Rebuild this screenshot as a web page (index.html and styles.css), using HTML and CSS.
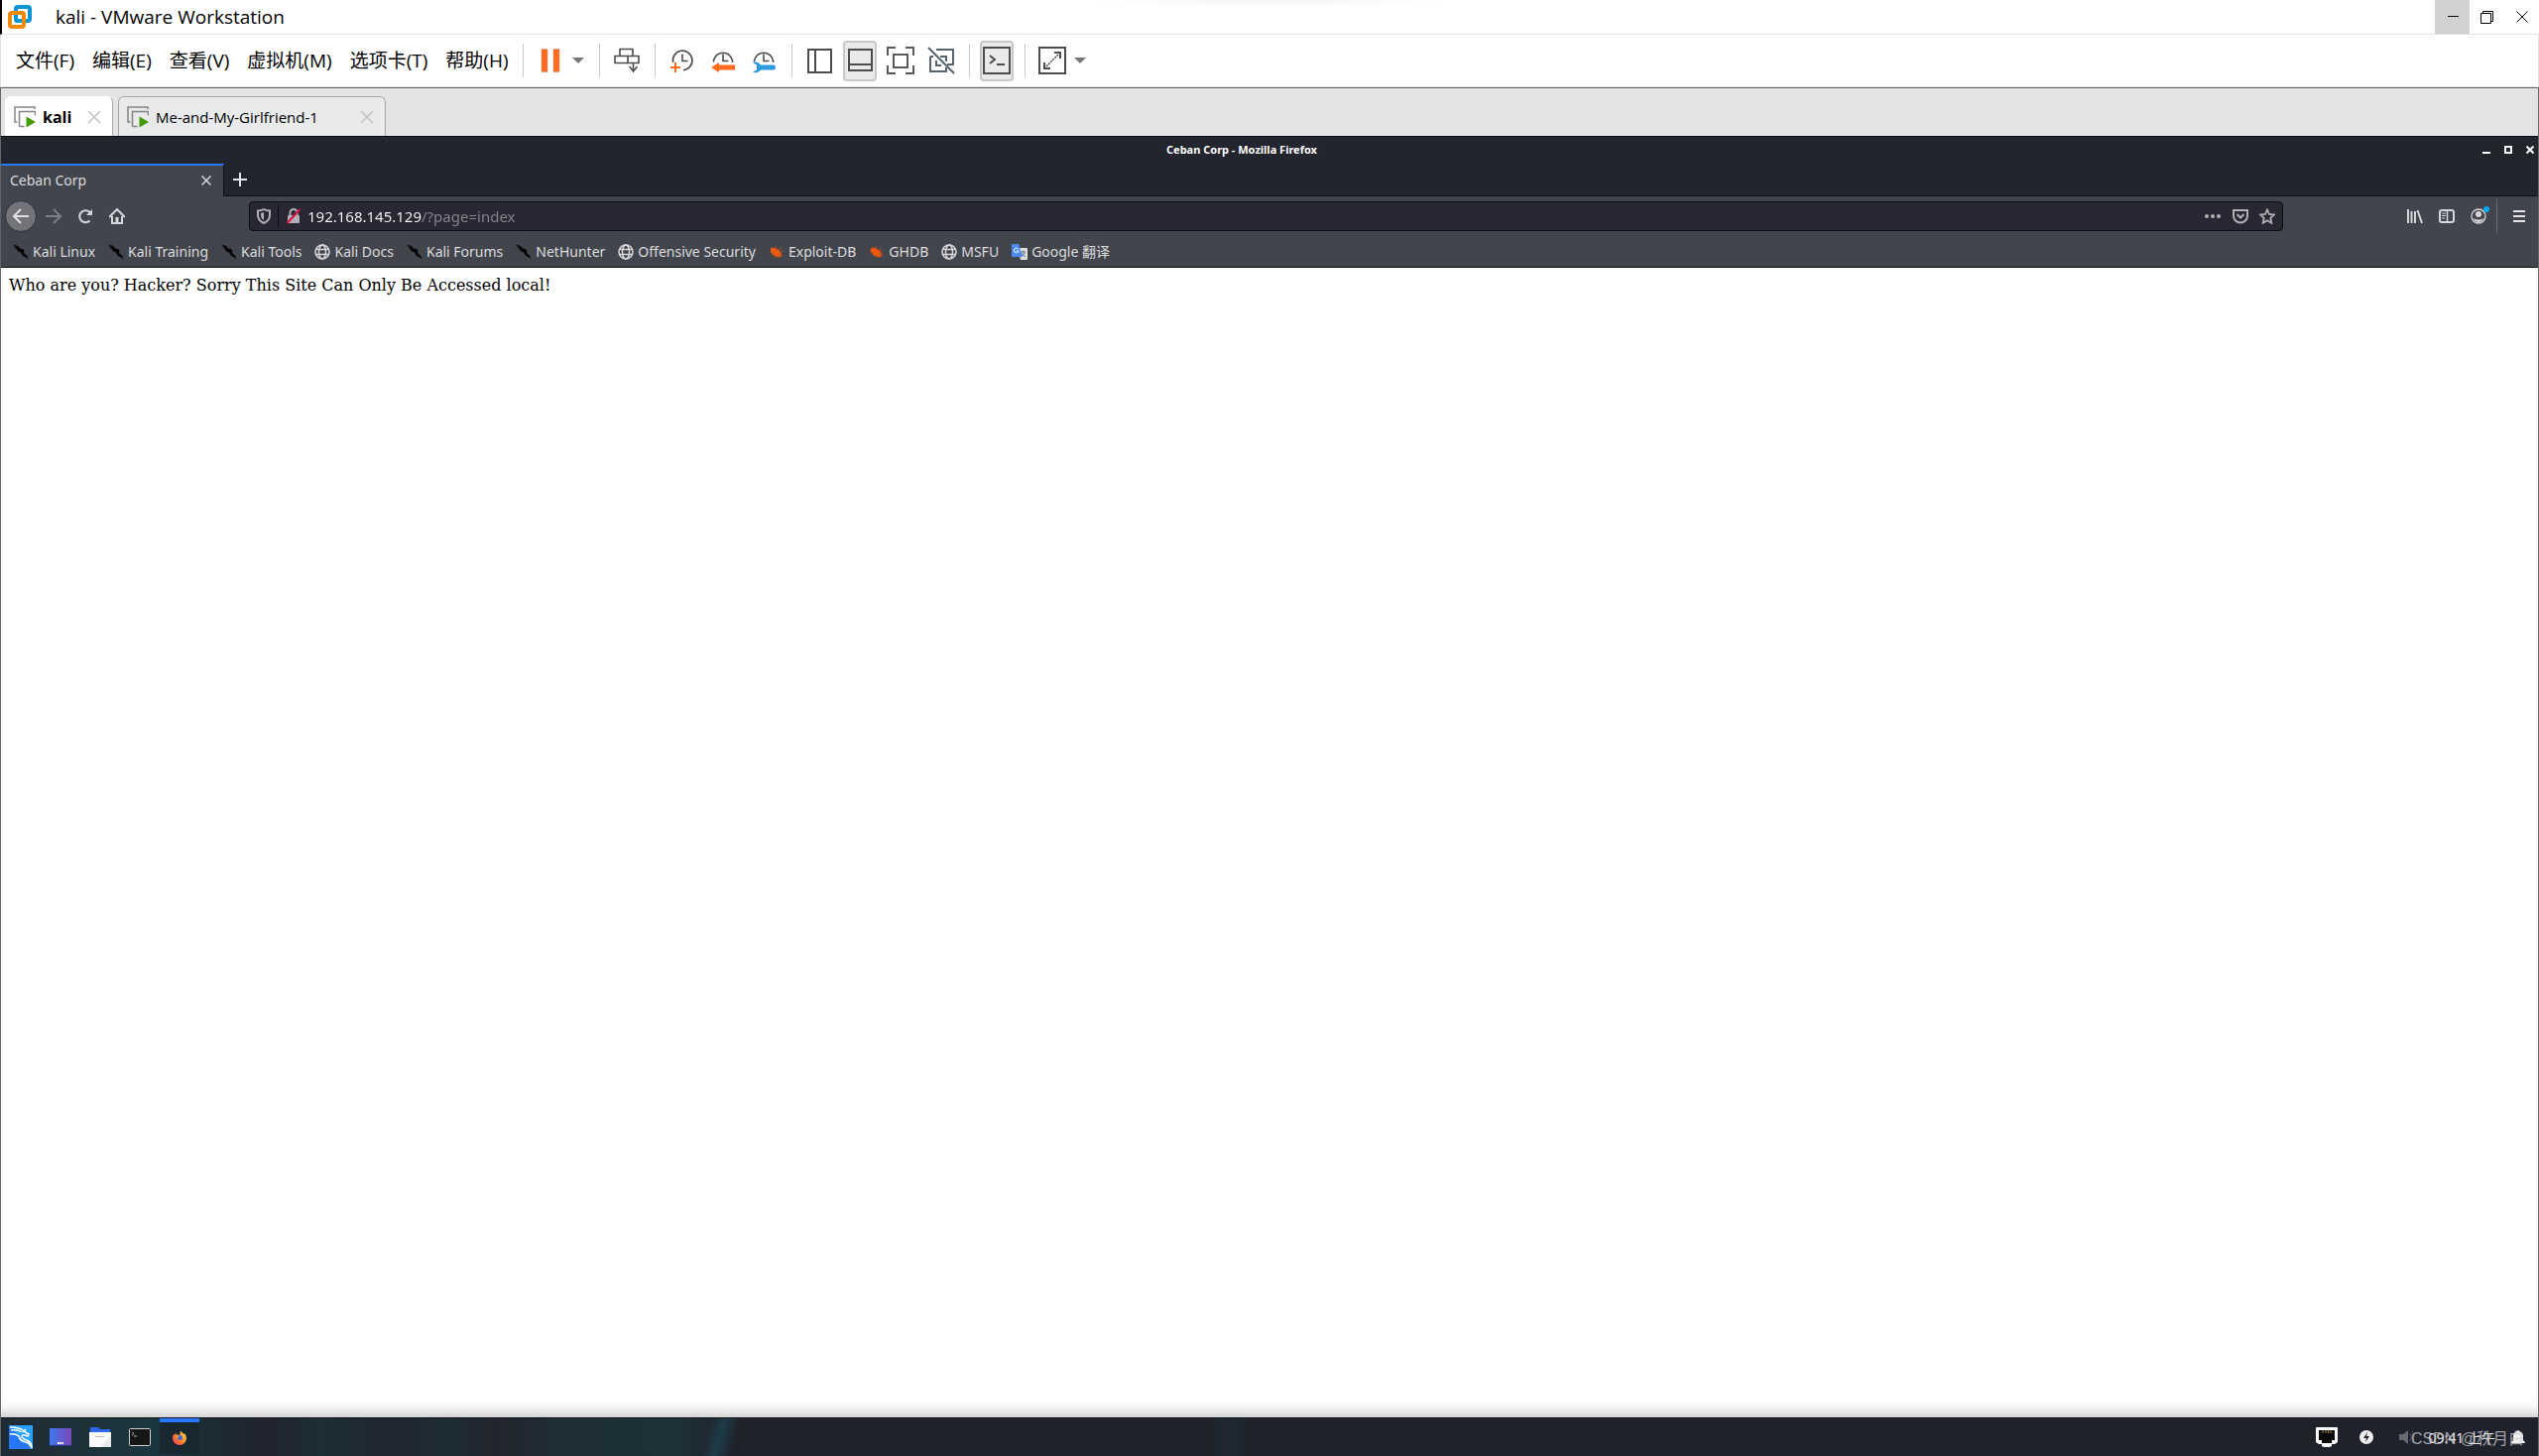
FILE: index.html
```html
<!DOCTYPE html>
<html lang="zh-CN">
<head>
<meta charset="UTF-8" />
<meta name="viewport" content="width=device-width, initial-scale=1" />
<title>kali - VMware Workstation</title>
<link rel="stylesheet" href="styles.css">
</head>
<body>

<!-- shared icons -->
<svg class="defs" width="0" height="0" aria-hidden="true">
  <symbol id="vm" viewBox="0 0 22 22">
    <path d="M3.500 16H1V1h20v2M5.500 20.500V5.500h16v4M5.500 20.500h5" fill="none" stroke="#858585" stroke-width="1.500"/>
    <path d="M12.500 10.500v11l9.500-5.500z" fill="#459b0c"/>
  </symbol>
  <symbol id="cross" viewBox="0 0 14 14">
    <path d="M1 1l12 12M13 1L1 13" fill="none" stroke="currentColor" stroke-width="1.600"/>
  </symbol>
  <symbol id="clock" viewBox="0 0 26 26">
    <path d="M3.600 15A9.800 9.800 0 1 1 14 22.700M13 6.500v7h5.500" fill="none" stroke="#4d4d4d" stroke-width="1.600"/>
  </symbol>
  <symbol id="half-clock" viewBox="0 0 26 26">
    <path d="M3.500 14.500V13a9.700 9.700 0 0 1 19 0v2M13 6.500v7h5.500" fill="none" stroke="#4d4d4d" stroke-width="1.600"/>
  </symbol>
  <symbol id="kali" viewBox="0 0 16 16">
    <path d="M0 .5l5 1.500 2.500 3 2-.5 2 2.500-.5 2 3 2.500 1.500 4-3-2.500-2.500-1-2-3.500-3-1L3.500 4z" fill="#050505"/>
    <path d="M1 3l3 1.500M2 5l3 .5" stroke="#1d1d20" stroke-width=".8"/>
  </symbol>
  <symbol id="globe" viewBox="0 0 16 16">
    <g fill="none" stroke="#d7d7db" stroke-width="1.500">
      <circle cx="8" cy="8" r="7"/><ellipse cx="8" cy="8" rx="3.500" ry="7"/><path d="M1.500 5.500h13M1.500 10.500h13"/>
    </g>
  </symbol>
  <symbol id="bug" viewBox="0 0 16 16">
    <path d="M2 4c3-1 7 0 10 4 1 2 1 4 0 5-3 1-8-1-10-5z" fill="#ee5b0c"/>
    <path d="M1 8l4 1M4 13l3-3M9 14l1-3M7 2l1 4M12 3l-1 4M15 7l-4 2M15 12l-4-2" stroke="#a8502a" stroke-width=".8"/>
  </symbol>
</svg>

<header class="titlebar">
  <svg class="logo" viewBox="0 0 24 24" fill="none" stroke-width="4">
    <rect x="8" y="2" width="14" height="14" rx="2" stroke="#0a95d6"/>
    <rect x="2" y="8" width="14" height="14" rx="2" stroke="#f08a06"/>
    <path d="M8 11v3q0 2 2 2h4" stroke="#0a95d6"/>
  </svg>
  <h1>kali - VMware Workstation</h1>
  <div class="glow"></div>
  <div class="win-controls">
    <button class="hovered" aria-label="Minimize"><svg width="12" height="12"><path d="M1 5.500h11" stroke="#000"/></svg></button>
    <button aria-label="Restore"><svg width="14" height="14" fill="none" stroke="#000"><path d="M.5 3.500h10v10H.5zM2.500 3.500v-2h10v10h-2"/></svg></button>
    <button aria-label="Close"><svg width="12" height="12"><path d="M.5 .5l11 11M11.500 .5l-11 11" stroke="#000"/></svg></button>
  </div>
</header>

<div class="menubar">
  <nav class="menus">
    <button>文件(F)</button>
    <button>编辑(E)</button>
    <button>查看(V)</button>
    <button>虚拟机(M)</button>
    <button>选项卡(T)</button>
    <button>帮助(H)</button>
  </nav>
  <div class="group">
    <button class="tool" aria-label="Suspend"><svg width="20" height="26"><path d="M1 1.500h6v23H1zM13 1.500h6v23h-6z" fill="#ff6a1c" stroke="#c79a80" stroke-width=".6"/></svg></button>
    <button class="caret" aria-label="Power options"></button>
  </div>
  <div class="group">
    <button class="tool" aria-label="Send keys">
      <svg width="26" height="26" fill="none" stroke="#4d4d4d" stroke-width="1.600"><path d="M6 1.500h13v7H6zM1 8.500h24v7H1zM14 8.500v7M19.500 15v8M15.500 19l4 5 4-5"/></svg>
    </button>
  </div>
  <div class="group">
    <button class="tool" aria-label="Take snapshot">
      <svg width="26" height="26"><use href="#clock"/><path d="M1 20h10M6 15v10" stroke="#ff6a1c" stroke-width="2"/></svg>
    </button>
    <button class="tool" aria-label="Revert snapshot">
      <svg width="26" height="26"><use href="#half-clock"/><path d="M1 20l8-5v2.500h16v5H9V25z" fill="#ff6a1c"/></svg>
    </button>
    <button class="tool" aria-label="Manage snapshots">
      <svg width="26" height="26"><use href="#half-clock"/><path d="M2 15q5-2 8 2.500h13q2 0 2 2.500t-2 2.500H10q-3 4-8 2l4-2v-5z" fill="#2d9ae0"/></svg>
    </button>
  </div>
  <div class="group">
    <button class="tool" aria-label="Library">
      <svg width="26" height="26" fill="none" stroke="#4d4d4d" stroke-width="2"><path d="M2 2h23v23H2zM9 2v23"/></svg>
    </button>
    <button class="tool active" aria-label="Thumbnail bar">
      <svg width="26" height="26" fill="none" stroke="#4d4d4d" stroke-width="2"><path d="M2 2h23v21H2zM2 17h23"/></svg>
    </button>
    <button class="tool" aria-label="Full screen">
      <svg width="28" height="28" fill="none" stroke="#5a5a5a" stroke-width="2"><path d="M1 9V1h8M19 1h8v8M27 19v8h-8M9 27H1v-8M7 8h14v13H7z"/></svg>
    </button>
    <button class="tool" aria-label="Unity">
      <svg width="28" height="28" fill="none" stroke="#556270" stroke-width="2"><path d="M9 3h17v15h-6M3 10v15h16v-4M3 10h3M13 10h6v5M9 14v5h5M1 1l26 26"/></svg>
    </button>
  </div>
  <div class="group">
    <button class="tool active" aria-label="Console view">
      <svg width="28" height="28" fill="none" stroke="#4d4d4d" stroke-width="2"><path d="M1 1h26v26H1zM7 9l5 4-5 4M14 18h8"/></svg>
    </button>
  </div>
  <div class="group">
    <button class="tool" aria-label="Stretch">
      <svg width="28" height="28" fill="none" stroke="#4d4d4d" stroke-width="2"><path d="M1 1h26v26H1zM16 6h6v6M6 16v6h6"/><path d="M8 20L20 8" stroke-width="1.500" stroke-dasharray="2 1"/></svg>
    </button>
    <button class="caret" aria-label="Stretch options"></button>
  </div>
</div>

<main class="workspace">
  <div class="vm-tabs">
    <div class="vm-tab current">
      <svg width="22" height="22"><use href="#vm"/></svg><span>kali</span>
      <button aria-label="Close kali"><svg width="14" height="14"><use href="#cross"/></svg></button>
    </div>
    <div class="vm-tab">
      <svg width="22" height="22"><use href="#vm"/></svg><span>Me-and-My-Girlfriend-1</span>
      <button aria-label="Close Me-and-My-Girlfriend-1"><svg width="14" height="14"><use href="#cross"/></svg></button>
    </div>
  </div>

  <section class="firefox">
    <div class="ff-title">
      <h2>Ceban Corp - Mozilla Firefox</h2>
      <div class="ff-controls">
        <button aria-label="Minimize"><svg width="8" height="8"><path d="M0 7h8" stroke="#fff" stroke-width="2"/></svg></button>
        <button aria-label="Maximize"><svg width="8" height="8"><path d="M1 1h6v6H1z" fill="none" stroke="#fff" stroke-width="2"/></svg></button>
        <button aria-label="Close"><svg width="8" height="8"><path d="M.5 .5l7 7M7.500 .5l-7 7" stroke="#fff" stroke-width="2"/></svg></button>
      </div>
    </div>

    <div class="ff-tabs">
      <div class="ff-tab">
        <span>Ceban Corp</span>
        <button aria-label="Close tab"><svg width="10" height="10"><path d="M.5 .5l9 9M9.500 .5l-9 9" stroke="#d7d7db" stroke-width="1.500"/></svg></button>
      </div>
      <button class="new-tab" aria-label="New tab"><svg width="14" height="14"><path d="M7 0v14M0 7h14" stroke="#e4e4e6" stroke-width="2"/></svg></button>
    </div>

    <div class="ff-nav">
      <div class="nav-buttons">
        <button class="back" aria-label="Back"><svg width="16" height="16" fill="none" stroke="#e0e0e2" stroke-width="2"><path d="M16 8H1M8 1L1 8l7 7"/></svg></button>
        <button aria-label="Forward"><svg width="16" height="16" fill="none" stroke="#7d7f84" stroke-width="2"><path d="M0 8h15M8 1l7 7-7 7"/></svg></button>
        <button aria-label="Reload"><svg width="16" height="16" fill="none" stroke="#d7d7db" stroke-width="2"><path d="M12.500 12.500A6 6 0 1 1 12.500 4L14 6"/><path d="M15 1v6H9z" fill="#d7d7db" stroke="none"/></svg></button>
        <button aria-label="Home"><svg width="16" height="16" fill="none" stroke="#d7d7db" stroke-width="2"><path d="M0 9l8-8 8 8M3 8v7h10V8"/><path d="M8 9v5" stroke-width="3"/></svg></button>
      </div>
      <div class="url-box">
        <svg width="14" height="16"><path d="M1 2.500q3.500 0 6-1.500 2.500 1.500 6 1.500v4q0 6-6 8.500-6-2.500-6-8.500z" fill="none" stroke="#b1b1b5" stroke-width="2"/><path d="M7 4v8q-3-2-3-5.500V5z" fill="#b1b1b5"/></svg>
        <i class="url-sep"></i>
        <svg width="16" height="16"><path d="M4.500 7V4.500a3.500 3.500 0 0 1 7 0V7" fill="none" stroke="#b1b1b5" stroke-width="2"/><rect x="2" y="7" width="12" height="8" rx="1" fill="#b1b1b5"/><path d="M1.500 15L14.500 1" stroke="#e3103f" stroke-width="2"/></svg>
        <input class="url" type="text" aria-label="Address" value="192.168.145.129/?page=index">
        <div class="url-actions">
          <button aria-label="Page actions"><svg width="18" height="16" fill="#b1b1b5"><circle cx="3" cy="8" r="2"/><circle cx="9" cy="8" r="2"/><circle cx="15" cy="8" r="2"/></svg></button>
          <button aria-label="Pocket"><svg width="16" height="16" fill="none" stroke="#b1b1b5" stroke-width="2"><path d="M1 2h14v5.500a7 7 0 0 1-14 0zM4.500 6L8 9.500 11.500 6"/></svg></button>
          <button aria-label="Bookmark"><svg width="16" height="16"><path d="M8 1.500l2 4.500 5 .5-3.700 3.300 1 5L8 12.200l-4.300 2.600 1-5L1 6.500 6 6z" fill="none" stroke="#b1b1b5" stroke-width="1.800"/></svg></button>
        </div>
      </div>
      <div class="ff-tools">
        <button aria-label="Library"><svg width="16" height="16" stroke="#d7d7db" stroke-width="2"><path d="M1 1v14M4.500 3v12M8 3v12M10.500 2l4.500 13"/></svg></button>
        <button aria-label="Sidebars"><svg width="16" height="16" fill="none" stroke="#d7d7db"><rect x="1" y="2" width="14" height="12" rx="2" stroke-width="2"/><path d="M8.500 2v12" stroke-width="1.500"/><path d="M3 5h4M3 7.500h4M3 10h3"/></svg></button>
        <button class="account" aria-label="Account"><svg width="16" height="16"><circle cx="8" cy="8" r="7" fill="none" stroke="#d7d7db" stroke-width="1.300"/><circle cx="8" cy="6" r="3" fill="#d7d7db"/><path d="M3 10q5 3 10 0-1 4-5 4t-5-4z" fill="#d7d7db"/></svg><i class="badge"></i></button>
        <i class="tool-sep"></i>
        <button aria-label="Menu"><svg width="12" height="12" stroke="#e4e4e6" stroke-width="2"><path d="M0 1h12M0 6h12M0 11h12"/></svg></button>
      </div>
    </div>

    <nav class="bookmarks">
      <a href="#"><svg><use href="#kali"/></svg>Kali Linux</a>
      <a href="#"><svg><use href="#kali"/></svg>Kali Training</a>
      <a href="#"><svg><use href="#kali"/></svg>Kali Tools</a>
      <a href="#"><svg><use href="#globe"/></svg>Kali Docs</a>
      <a href="#"><svg><use href="#kali"/></svg>Kali Forums</a>
      <a href="#"><svg><use href="#kali"/></svg>NetHunter</a>
      <a href="#"><svg><use href="#globe"/></svg>Offensive Security</a>
      <a href="#"><svg><use href="#bug"/></svg>Exploit-DB</a>
      <a href="#"><svg><use href="#bug"/></svg>GHDB</a>
      <a href="#"><svg><use href="#globe"/></svg>MSFU</a>
      <a href="#"><svg viewBox="0 0 16 16"><path d="M6 4h9q1 0 1 1v10q0 1-1 1H9z" fill="#dedede"/><path d="M9 8h5M11.500 6.500V8M13.500 8q-1 3-4 5M10 9q1 2 4 4" stroke="#62717c" fill="none"/><path d="M1 0h6l4 13H1q-1 0-1-1V1q0-1 1-1z" fill="#4c8bf5"/><path d="M6.500 5A2.300 2.300 0 1 0 7 7H5" stroke="#fff" fill="none"/></svg>Google 翻译</a>
    </nav>

    <article class="page">Who are you? Hacker? Sorry This Site Can Only Be Accessed local!</article>
  </section>

  <footer class="taskbar">
    <div class="launchers">
      <button aria-label="Applications">
        <svg width="24" height="24"><defs><linearGradient id="kbg" x1="0" y1="1" x2="1" y2="0"><stop offset=".5" stop-color="#2878ff"/><stop offset=".5" stop-color="#28a0ff"/></linearGradient></defs>
          <rect width="24" height="24" fill="url(#kbg)"/>
          <path d="M1 2q10 0 14 4l5 3-1 2-3-1q-3-1-3 2 1 2 5 3 5 2 5 8-2-5-6-6-6-1-7-6Q6 8 1 9M2 5q7-1 11 2M14 7l3-3" fill="none" stroke="#fff" stroke-width="1.500"/></svg>
      </button>
      <button aria-label="Show desktop">
        <svg width="22" height="18"><defs><linearGradient id="dbg"><stop stop-color="#3f76ee"/><stop offset="1" stop-color="#7a48b8"/></linearGradient></defs><rect width="22" height="18" rx="1" fill="url(#dbg)"/><path d="M0 17.500h22" stroke="#26358c"/><path d="M8 15h6" stroke="#fff" stroke-width="2" stroke-dasharray="2 .5"/></svg>
      </button>
      <button aria-label="Files">
        <svg width="22" height="20"><path d="M1 5V1q0-1 1-1h7l2 2h9q1 0 1 1v3z" fill="#2c68e8"/><path d="M0 5h22v14q0 1-1 1H1q-1 0-1-1z" fill="#fafafa"/><path d="M22 7v12q0 1-1 1h-9z" fill="#e9e9e9"/><path d="M6 9.500h9" stroke="#bbb"/></svg>
      </button>
      <button aria-label="Terminal">
        <svg width="22" height="18"><rect x=".5" y=".5" width="21" height="17" rx="1" fill="#151618" stroke="#d0d0d0"/><path d="M3 4l2 1.500L3 7M5 8h3" fill="none" stroke="#aaa"/></svg>
      </button>
      <button class="running" aria-label="Firefox">
        <svg width="14" height="14"><defs><linearGradient id="fx" x1="1" y1="0" x2="0" y2="1"><stop stop-color="#ffe14a"/><stop offset=".5" stop-color="#ff8a2a"/><stop offset="1" stop-color="#ee2f5c"/></linearGradient></defs>
          <path d="M1 3l1 1 1-2 2 2 3-1q-1-2 0-3 2 1 3 3l1-1q2 3 2 5a7 7 0 0 1-14 0Q0 5 1 3z" fill="url(#fx)"/><circle cx="7.500" cy="6.500" r="2.500" fill="#3f62d8"/><path d="M3 5q3-1 4 1-3 0-2 2" fill="#ff9a30"/></svg>
      </button>
    </div>
    <div class="tray">
      <svg class="net" width="22" height="20"><path d="M1 0h20q1 0 1 1v14l-3 2h-3v2l-2 1H8l-2-1v-2H3l-3-2V1q0-1 1-1z" fill="#fff"/><path d="M3 3h16v10h-3v3H6v-3H3z" fill="#080808"/><path d="M7 3v3M10 3v3M12.500 3v3M15 3v3" stroke="#a8894a"/></svg>
      <svg class="power" width="14" height="14"><circle cx="7" cy="7" r="7" fill="#eee"/><path d="M8 2L4 8h3l-1 4 4-6H7z" fill="#20232c"/></svg>
      <svg class="volume" width="16" height="14"><path d="M0 4h4l5-4v14l-5-4H0z" fill="#666970"/><path d="M11 3q3 4 0 8M13 1q4 6 0 12" fill="none" stroke="#50535a"/></svg>
      <time>09:41 上午</time>
      <svg class="bell" width="14" height="14"><path d="M7 0q1 0 1 1 4 1 4 5v4l2 2v1H0v-1l2-2V6q0-4 4-5 0-1 1-1z" fill="#eee"/></svg>
      <span class="watermark">CSDN @秋月白</span>
    </div>
  </footer>
</main>

</body>
</html>
```

FILE: styles.css
```css
* {
  box-sizing: border-box;
}

body {
  margin: 0;
  min-height: 100vh;
  display: flex;
  flex-direction: column;
  background: #fff;
  color: #000;
  font-family: "Noto Sans", "Noto Sans CJK SC", sans-serif;
  font-size: 14px;
}

button {
  display: flex;
  align-items: center;
  justify-content: center;
  padding: 0;
  border: none;
  background: none;
  color: inherit;
  font: inherit;
}

svg {
  display: block;
  flex: none;
}

.defs {
  position: absolute;
}

h1, h2 {
  margin: 0;
  font-weight: normal;
}

/* host window */

.titlebar {
  position: relative;
  display: flex;
  align-items: center;
  height: 35px;
  padding-left: 6px;
  border-left: 2px solid #000;
  border-bottom: 1px solid #e2e2e2;
}

.logo {
  width: 24px;
  height: 24px;
}

h1 {
  margin-left: 24px;
  font-family: "Open Sans", sans-serif;
  font-size: 19px;
  line-height: 24px;
}

.glow {
  position: absolute;
  top: 0;
  left: 43%;
  width: 14%;
  height: 8px;
  background: radial-gradient(ellipse at top, #f4f4f4, #fff 70%);
}

.win-controls {
  display: flex;
  align-self: stretch;
  margin-left: auto;
}

.win-controls button {
  width: 35px;
}

.win-controls .hovered {
  background: #d2d2d2;
}

.menubar {
  display: flex;
  align-items: center;
  height: 53px;
  padding-left: 15px;
  border: 1px solid #e2e2e2;
  border-width: 0 1px 1px;
}

.menus {
  display: flex;
  gap: 18px;
  margin-right: 14px;
  font-family: "Open Sans", "Noto Sans CJK SC", sans-serif;
  font-size: 19px;
  line-height: 24px;
}

.group {
  display: flex;
  align-items: center;
  gap: 7px;
  height: 34px;
  padding: 0 11px 0 10px;
  border-left: 1px solid #c9c9c9;
}

.tool {
  width: 34px;
  height: 41px;
}

.tool.active {
  border: 2px solid #c8c8c8;
  border-radius: 4px;
  background: #e9eaec;
}

.caret {
  width: 20px;
  height: 34px;
  margin-left: -6px;
}

.caret::before {
  content: "";
  border: 6px solid transparent;
  border-top-color: #777;
  border-bottom: 0;
}

.workspace {
  flex: 1;
  display: flex;
  flex-direction: column;
  border: 1px solid #666;
  border-width: 1px 1px 0;
}

.vm-tabs {
  display: flex;
  align-items: flex-end;
  gap: 5px;
  height: 48px;
  padding-left: 4px;
  background: #e3e4e6;
}

.vm-tab {
  display: flex;
  align-items: center;
  width: 270px;
  height: 40px;
  padding: 0 11px 0 8px;
  border: 1px solid #a5a7a9;
  border-bottom: 0;
  border-radius: 6px 6px 0 0;
  background: #e9eaec;
  font-family: "Open Sans", sans-serif;
  font-size: 15px;
}

.vm-tab.current {
  width: 109px;
  border-color: #fff #a5a7a9 #fff #fff;
  background: #fff;
  font-size: 16px;
  font-weight: bold;
}

.vm-tab span {
  margin-left: 7px;
}

.vm-tab button {
  margin-left: auto;
  color: #c3c3c3;
}

/* guest browser */

.firefox {
  flex: 1;
  display: flex;
  flex-direction: column;
  border-top: 1px solid #0c0c14;
  background: #22252e;
  color: #dcdcde;
}

.ff-title {
  display: flex;
  height: 27px;
  padding-right: 4px;
}

h2 {
  flex: 1;
  color: #fff;
  font-size: 11px;
  font-weight: bold;
  line-height: 26px;
  text-align: center;
}

.ff-controls {
  display: flex;
  gap: 14px;
  height: 26px;
}

.ff-tabs {
  display: flex;
  height: 33px;
  border-bottom: 1px solid #0f1017;
}

.ff-tab {
  display: flex;
  align-items: center;
  justify-content: space-between;
  width: 225px;
  height: 33px;
  padding: 0 12px 2px 9px;
  border-top: 2px solid #2777ff;
  border-right: 1px solid #0f1017;
  background: #43454c;
  font-size: 14px;
}

.new-tab {
  width: 32px;
  height: 31px;
}

.ff-nav {
  display: flex;
  align-items: center;
  height: 40px;
  background: #43454c;
}

.nav-buttons {
  display: flex;
  align-items: center;
  gap: 16px;
  width: 250px;
  padding-left: 4px;
}

.back {
  width: 32px;
  height: 32px;
  margin-right: -7px;
  border: 1px solid #2e3036;
  border-radius: 50%;
  background: #737479;
}

.url-box {
  flex: 1;
  display: flex;
  align-items: center;
  height: 30px;
  padding: 0 7px;
  border: 1px solid #0c0c14;
  border-radius: 4px;
  background: #272834;
}

.url-sep {
  width: 1px;
  height: 22px;
  margin: 0 7px;
  background: #0c0c14;
}

/* host name bright, path dimmed */
.url {
  flex: 1;
  margin-left: 6px;
  padding: 0;
  border: none;
  outline: none;
  background: linear-gradient(to right, #f9f9fa 115px, #86868e 115px);
  -webkit-background-clip: text;
  background-clip: text;
  color: transparent;
  font: 15px/20px "Noto Sans", sans-serif;
}

.url-actions {
  display: flex;
  gap: 11px;
}

.ff-tools {
  display: flex;
  align-items: center;
  gap: 16px;
  width: 257px;
  padding-right: 13px;
  justify-content: flex-end;
}

.account {
  position: relative;
}

.badge {
  position: absolute;
  top: -2px;
  right: -3px;
  width: 6px;
  height: 6px;
  border-radius: 50%;
  background: #00a8ff;
}

.tool-sep {
  width: 1px;
  height: 34px;
  margin-left: -6px;
  background: #67696e;
}

.bookmarks {
  display: flex;
  align-items: center;
  gap: 13px;
  height: 32px;
  padding: 0 12px;
  border-bottom: 1px solid #0c0c14;
  background: #43454c;
}

.bookmarks a {
  display: flex;
  align-items: center;
  gap: 4px;
  color: inherit;
  line-height: 20px;
  text-decoration: none;
}

.bookmarks svg {
  width: 16px;
  height: 16px;
}

.page {
  flex: 1;
  padding: 8px;
  background: linear-gradient(to top, #d4d4d4, #f0f0f0 8px, #fff 16px);
  color: #000;
  font: 16px/19px "DejaVu Serif", serif;
}

/* guest panel */

.taskbar {
  display: flex;
  justify-content: space-between;
  height: 39px;
  border-top: 1px solid #15181e;
  background:
    linear-gradient(105deg, transparent 692px, #1c3c48 704px, transparent 720px),
    linear-gradient(to right, #1f2a34, #1c373e 150px, #1b2d35 200px, #21232d 270px, #1c2e35 320px, #21262f 400px, #1d2d35 450px, #22242d 500px, #1e2d35 560px, #1c3138 680px, #20222b 740px, #20222b 1220px, #1e2934 1240px, #20222b 1260px);
}

.launchers {
  display: flex;
}

.launchers button {
  width: 40px;
}

.launchers .running {
  border-top: 4px solid #2777ff;
  border-bottom: 2px solid transparent;
  background: #182730;
  background-clip: padding-box;
}

.tray {
  position: relative;
  display: flex;
  align-items: center;
  padding-right: 13px;
  color: #e6e6e8;
  font-size: 14px;
}

.power {
  margin: 0 26px 0 22px;
}

.volume {
  margin-right: 14px;
}

.bell {
  margin-left: 16px;
}

.watermark {
  position: absolute;
  right: 14px;
  color: rgba(205, 205, 208, 0.75);
  font-family: "Liberation Sans", "Noto Sans CJK SC", sans-serif;
  font-size: 16px;
  white-space: nowrap;
}
```
